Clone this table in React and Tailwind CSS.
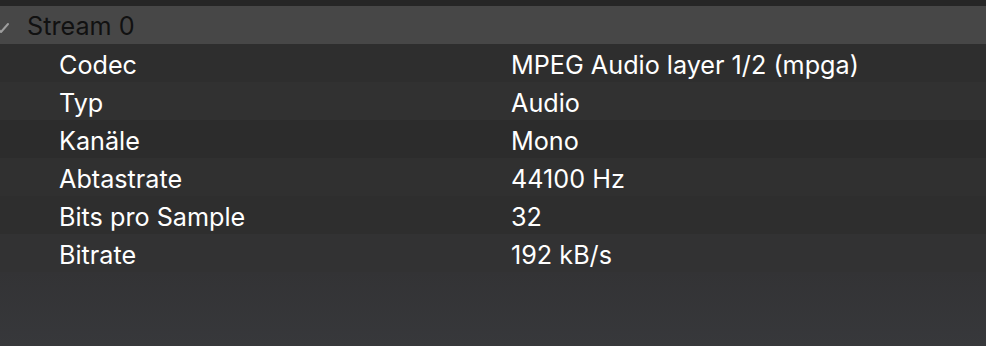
const rows = [
    { label: 'Codec', value: 'MPEG Audio layer 1/2 (mpga)', bg: 'bg-[#2e2e2e]' },
    { label: 'Typ', value: 'Audio', bg: 'bg-[#313131]' },
    { label: 'Kanäle', value: 'Mono', bg: 'bg-[#2c2c2c]' },
    { label: 'Abtastrate', value: '44100 Hz', bg: 'bg-[#303030]' },
    { label: 'Bits pro Sample', value: '32', bg: 'bg-[#2e2e2e]' },
    { label: 'Bitrate', value: '192 kB/s', bg: 'bg-[#323233]' },
];

export default function App() {
    return (
        <div className="w-[986px] h-[346px] overflow-hidden flex flex-col bg-[#36373a] font-['Inter','Liberation_Sans',sans-serif]">
            <div className="h-[6px] bg-[#262626]"></div>

            {/* Stream header */}
            <div className="h-[38px] flex items-center pt-[4px] bg-[#474747]">
                <svg width="16" height="12" viewBox="0 0 16 12" className="ml-[-7px] mr-[18px] mt-[2px]">
                    <polyline points="2 4 8 10 15 2" fill="none" stroke="#9d9d9d" strokeWidth="2" strokeLinecap="round" strokeLinejoin="round" />
                </svg>
                <span className="text-[25.2px] text-[#111111] leading-none">Stream 0</span>
            </div>

            {/* Properties */}
            <div className="flex flex-col">
                {rows.map(row => (
                    <div key={row.label} className={`h-[38px] flex items-center pt-[5px] text-[25.2px] text-white leading-none ${row.bg}`}>
                        <div className="w-[511px] pl-[59px]">{row.label}</div>
                        <div>{row.value}</div>
                    </div>
                ))}
            </div>

            <div className="flex-1 bg-gradient-to-b from-[#333335] to-[#37383b]"></div>
        </div>
    );
}
